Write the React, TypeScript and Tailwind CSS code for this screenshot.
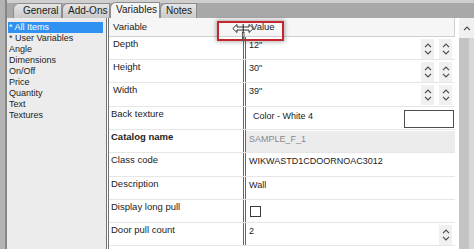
import React from 'react';

interface Row {
    label: string;
    h: string;
    indent?: boolean;
    bold?: boolean;
    value?: string;
    spin?: number;
    swatch?: boolean;
    readOnly?: boolean;
    checkbox?: boolean;
}

const rows: Row[] = [
    { label: 'Depth', h: 'h-[23px]', indent: true, value: '12"', spin: 2 },
    { label: 'Height', h: 'h-[23px]', indent: true, value: '30"', spin: 2 },
    { label: 'Width', h: 'h-[24px]', indent: true, value: '39"', spin: 2 },
    { label: 'Back texture', h: 'h-[23px]', value: 'Color - White 4', swatch: true },
    { label: 'Catalog name', h: 'h-[23px]', bold: true, value: 'SAMPLE_F_1', readOnly: true },
    { label: 'Class code', h: 'h-[24px]', value: 'WIKWASTD1CDOORNOAC3012' },
    { label: 'Description', h: 'h-[23px]', value: 'Wall' },
    { label: 'Display long pull', h: 'h-[23px]', checkbox: true },
    { label: 'Door pull count', h: 'h-[23px]', value: '2', spin: 1 },
];

const groups = ['* All Items', '* User Variables', 'Angle', 'Dimensions', 'On/Off', 'Price', 'Quantity', 'Text', 'Textures'];

const Chevron = ({ up }: { up?: boolean }) => (
    <svg width="8" height="5" viewBox="0 0 8 5" className="block">
        <path d={up ? 'M1 4.2 L4 1.2 L7 4.2' : 'M1 0.8 L4 3.8 L7 0.8'} fill="none" stroke="#4a4a4a" strokeWidth="1.2" />
    </svg>
);

const Spinner = () => (
    <div className="w-[13px] h-[20px] mt-[2px] bg-[#f0f0f0] flex flex-col items-center justify-between py-[4px]">
        <Chevron up />
        <Chevron />
    </div>
);

const Tab = ({ label, className, active }: { label: string; className: string; active?: boolean }) => (
    <div
        className={`border border-b-0 border-[#8c8c8c] rounded-tl-[6px] text-[10px] leading-[14px] text-[#202020] ${
            active ? 'h-[16px] bg-[#f4f4f4] relative z-10' : 'h-[15px] bg-linear-to-b from-[#e6e6e6] to-[#c9c9c9]'
        } ${className}`}
    >
        {label}
    </div>
);

export default function App() {
    return (
        <div className="w-[474px] h-[249px] overflow-hidden flex relative font-['Liberation_Sans',Arial,sans-serif] bg-[#b3b3b3]">
            {/* window frame */}
            <div className="w-[7px] h-full bg-[#b3b3b3] border-r-2 border-[#878787]" />

            <div className="flex-1 flex flex-col">
                {/* tab strip */}
                <div className="h-[18px] bg-[#a8a8a8] border-t-[3px] border-[#cfcfcf] flex items-end pl-[6px]">
                    <Tab label="General" className="w-[49px] pl-[9px]" />
                    <Tab label="Add-Ons" className="w-[48px] pl-[5px]" />
                    <Tab label="Variables" className="w-[50px] pl-[5px]" active />
                    <Tab label="Notes" className="w-[37px] pl-[5px]" />
                </div>

                <div className="flex flex-1">
                    {/* group list */}
                    <div className="w-[99px] bg-[#ececec] pt-[4px] text-[9px] text-[#1c1c1c]">
                        {groups.map((g, i) => (
                            <div
                                key={g}
                                className={`h-[11px] leading-[11px] ml-[1px] mr-[3px] pl-[1px] whitespace-nowrap ${
                                    i === 0 ? 'bg-[#3092f0] text-white' : ''
                                }`}
                            >
                                {g}
                            </div>
                        ))}
                    </div>

                    {/* variables grid */}
                    <div className="w-[353px] bg-white border-l-[3px] border-double border-[#737373] pr-[4px] text-[9.5px] text-[#1c1c1c]">
                        <div className="h-[19px] flex items-center border-b border-[#cfcfcf] bg-[#f6f6f6] border-r pt-[1px]">
                            <div className="w-[137px] pl-[4px]">Variable</div>
                            <div className="pl-[5px]">Value</div>
                        </div>
                        {rows.map(r => (
                            <div key={r.label} className={`${r.h} flex border-b border-[#e6e6e6]`}>
                                <div
                                    className={`w-[137px] border-r-[3px] border-double border-[#666] leading-[12px] pt-[1px] whitespace-nowrap ${
                                        r.indent ? 'pl-[4px]' : 'pl-[2px]'
                                    } ${r.bold ? 'font-bold' : ''}`}
                                >
                                    {r.label}
                                </div>
                                <div
                                    className={`flex-1 flex text-[9px] ${
                                        r.readOnly ? 'bg-[#ececec] text-[#8a8a8a] mt-[1px]' : 'text-[#222]'
                                    }`}
                                >
                                    {r.value && (
                                        <div
                                            className={`leading-[12px] whitespace-nowrap ${
                                                r.swatch ? 'pl-[7px] pt-[3px]' : 'pl-[3px] pt-[2px]'
                                            }`}
                                        >
                                            {r.value}
                                        </div>
                                    )}
                                    {r.checkbox && (
                                        <div className="w-[11px] h-[11px] border border-[#3a3a3a] bg-white mt-[6px] ml-[4px]" />
                                    )}
                                    {r.swatch && (
                                        <div className="ml-auto mr-[1px] mt-[3px] w-[50px] h-[18px] border border-[#4d4d4d] bg-white" />
                                    )}
                                    {r.spin && (
                                        <div className="ml-auto mr-[3px] flex gap-[5px]">
                                            {r.spin === 2 && <Spinner />}
                                            <Spinner />
                                        </div>
                                    )}
                                </div>
                            </div>
                        ))}
                    </div>

                    {/* scrollbar */}
                    <div className="w-[15px] flex flex-col bg-[#d8d8d8]">
                        <div className="h-[20px] bg-[#f0f0f0] flex items-center justify-center">
                            <Chevron up />
                        </div>
                        <div className="flex-1 w-[10px] bg-[#c4c4c4]" />
                    </div>
                </div>
            </div>

            {/* highlight callout around the column resize cursor */}
            <div className="absolute left-[217px] top-[21px] w-[67px] h-[20px] border-2 border-[#c5262f] shadow-[0_0_4px_1px_rgba(0,0,0,0.3)]" />
            <svg className="absolute left-[232px] top-[23px]" width="22" height="18" viewBox="0 0 22 18">
                <line x1="10.5" y1="9" x2="10.5" y2="18" stroke="#5a5a5a" strokeWidth="1" />
                <line x1="12" y1="9" x2="12" y2="18" stroke="#5a5a5a" strokeWidth="1" />
                <path d="M0.8 5.5 L5 1.5 L5 4 L17 4 L17 1.5 L21.2 5.5 L17 9.5 L17 7 L5 7 L5 9.5 Z" fill="white" stroke="#1e1e1e" strokeWidth="0.9" />
                <line x1="11.2" y1="1" x2="11.2" y2="10" stroke="#1e1e1e" strokeWidth="1" />
            </svg>
        </div>
    );
}
